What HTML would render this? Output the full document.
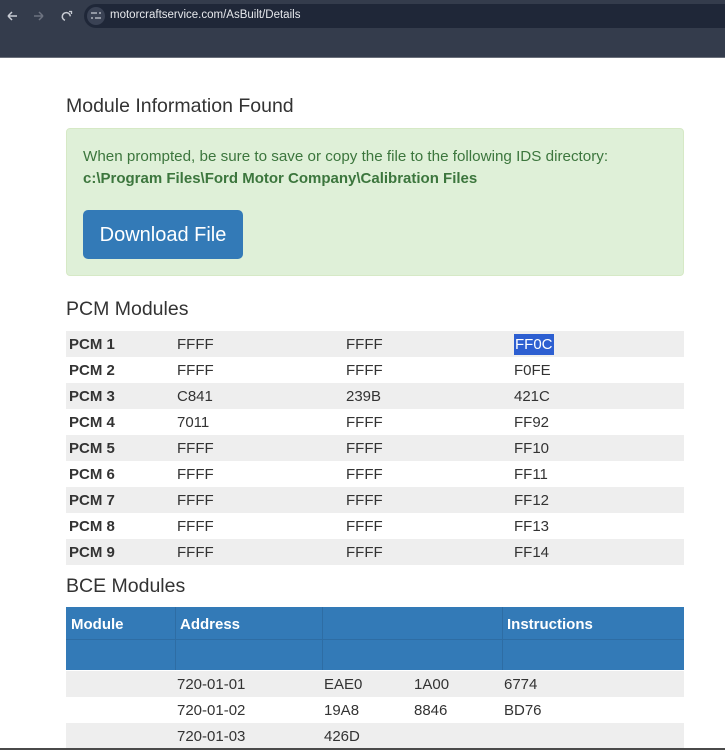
<!DOCTYPE html>
<html><head><meta charset="utf-8"><style>
*{margin:0;padding:0;box-sizing:border-box}
body{width:725px;height:750px;overflow:hidden;background:#fff;font-family:"Liberation Sans",Arial,sans-serif;color:#333;position:relative}
.a{position:absolute;white-space:nowrap}
.row{position:absolute;left:66px;width:618px;height:26px;font-size:15px;line-height:28px}
.row span{position:absolute;top:0}
.g{background:#eeeeee}
</style></head><body>
<div class="a" style="left:0;top:0;width:725px;height:57px;background:#343c4c"></div>
<div class="a" style="left:84px;top:4px;width:641px;height:24px;background:#1f2738;border-radius:12px 0 0 12px"></div>
<div class="a" style="left:87px;top:7px;width:18px;height:18px;border-radius:9px;background:#3a4254"></div>
<div class="a" style="left:0;top:57px;width:725px;height:1px;background:#6a6f7a"></div>
<svg class="a" style="left:6px;top:9px" width="70" height="14" viewBox="0 0 70 14">
<path d="M2 7h9M2 7l4-4M2 7l4 4" stroke="#c8ccd4" stroke-width="1.5" fill="none"/>
<path d="M28 7h9M37 7l-4-4M37 7l-4 4" stroke="#6d7380" stroke-width="1.5" fill="none"/>
<path d="M63.5 4.5A4 4 0 1 0 62 11" stroke="#c8ccd4" stroke-width="1.5" fill="none" transform="rotate(40 60 7)"/><path d="M63 2.5l2.5 0 0 2.5" stroke="#c8ccd4" stroke-width="1.3" fill="none"/>
</svg>
<svg class="a" style="left:90px;top:10px" width="12" height="12"><path d="M1 3h6M9 3h2M1 8h2M5 8h6" stroke="#c8ccd4" stroke-width="1.3"/></svg>
<div class="a" style="left:110px;top:9px;font-size:11.5px;color:#e6e8ec">motorcraftservice.com/AsBuilt/Details</div>

<div class="a" style="left:66px;top:95px;font-size:19.5px;color:#333">Module Information Found</div>
<div class="a" style="left:66px;top:128px;width:618px;height:148px;background:#dff0d8;border:1px solid #d6e9c6;border-radius:4px"></div>
<div class="a" style="left:83px;top:148px;font-size:15.2px;color:#3c763d">When prompted, be sure to save or copy the file to the following IDS directory:</div>
<div class="a" style="left:83px;top:170px;font-size:15px;color:#3c763d;font-weight:bold">c:\Program Files\Ford Motor Company\Calibration Files</div>
<div class="a" style="left:83px;top:210px;width:160px;height:49px;background:#337ab7;border-radius:5px;color:#fff;font-size:20px;line-height:50px;text-align:center">Download File</div>

<div class="a" style="left:66px;top:298px;font-size:19.5px">PCM Modules</div>

<div class="row g" style="top:331px"><span style="left:3px;font-weight:bold">PCM 1</span><span style="left:111px">FFFF</span><span style="left:280px">FFFF</span><span style="left:448px;top:3px;height:21px;line-height:22px;background:#2d5fd1;color:#fff;padding:0 1px">FF0C</span></div>
<div class="row" style="top:357px"><span style="left:3px;font-weight:bold">PCM 2</span><span style="left:111px">FFFF</span><span style="left:280px">FFFF</span><span style="left:448px">F0FE</span></div>
<div class="row g" style="top:383px"><span style="left:3px;font-weight:bold">PCM 3</span><span style="left:111px">C841</span><span style="left:280px">239B</span><span style="left:448px">421C</span></div>
<div class="row" style="top:409px"><span style="left:3px;font-weight:bold">PCM 4</span><span style="left:111px">7011</span><span style="left:280px">FFFF</span><span style="left:448px">FF92</span></div>
<div class="row g" style="top:435px"><span style="left:3px;font-weight:bold">PCM 5</span><span style="left:111px">FFFF</span><span style="left:280px">FFFF</span><span style="left:448px">FF10</span></div>
<div class="row" style="top:461px"><span style="left:3px;font-weight:bold">PCM 6</span><span style="left:111px">FFFF</span><span style="left:280px">FFFF</span><span style="left:448px">FF11</span></div>
<div class="row g" style="top:487px"><span style="left:3px;font-weight:bold">PCM 7</span><span style="left:111px">FFFF</span><span style="left:280px">FFFF</span><span style="left:448px">FF12</span></div>
<div class="row" style="top:513px"><span style="left:3px;font-weight:bold">PCM 8</span><span style="left:111px">FFFF</span><span style="left:280px">FFFF</span><span style="left:448px">FF13</span></div>
<div class="row g" style="top:539px"><span style="left:3px;font-weight:bold">PCM 9</span><span style="left:111px">FFFF</span><span style="left:280px">FFFF</span><span style="left:448px">FF14</span></div>

<div class="a" style="left:66px;top:575px;font-size:19.5px">BCE Modules</div>
<div class="a" style="left:66px;top:607px;width:618px;height:63px;background:#337ab7"></div>
<div class="a" style="left:66px;top:639px;width:618px;height:1px;background:#2e6da4"></div>
<div class="a" style="left:175px;top:607px;width:1px;height:63px;background:#2e6da4"></div>
<div class="a" style="left:322px;top:607px;width:1px;height:63px;background:#2e6da4"></div>
<div class="a" style="left:502px;top:607px;width:1px;height:63px;background:#2e6da4"></div>
<div class="a" style="left:71px;top:616px;font-size:15px;font-weight:bold;color:#fff">Module</div>
<div class="a" style="left:180px;top:616px;font-size:15px;font-weight:bold;color:#fff">Address</div>
<div class="a" style="left:507px;top:616px;font-size:15px;font-weight:bold;color:#fff">Instructions</div>
<div class="row g" style="top:671px"><span style="left:111px">720-01-01</span><span style="left:258px">EAE0</span><span style="left:348px">1A00</span><span style="left:438px">6774</span></div>
<div class="row" style="top:697px"><span style="left:111px">720-01-02</span><span style="left:258px">19A8</span><span style="left:348px">8846</span><span style="left:438px">BD76</span></div>
<div class="row g" style="top:723px"><span style="left:111px">720-01-03</span><span style="left:258px">426D</span></div>
<div class="a" style="left:0;top:748px;width:725px;height:2px;background:#4a4a4a"></div>
</body></html>
